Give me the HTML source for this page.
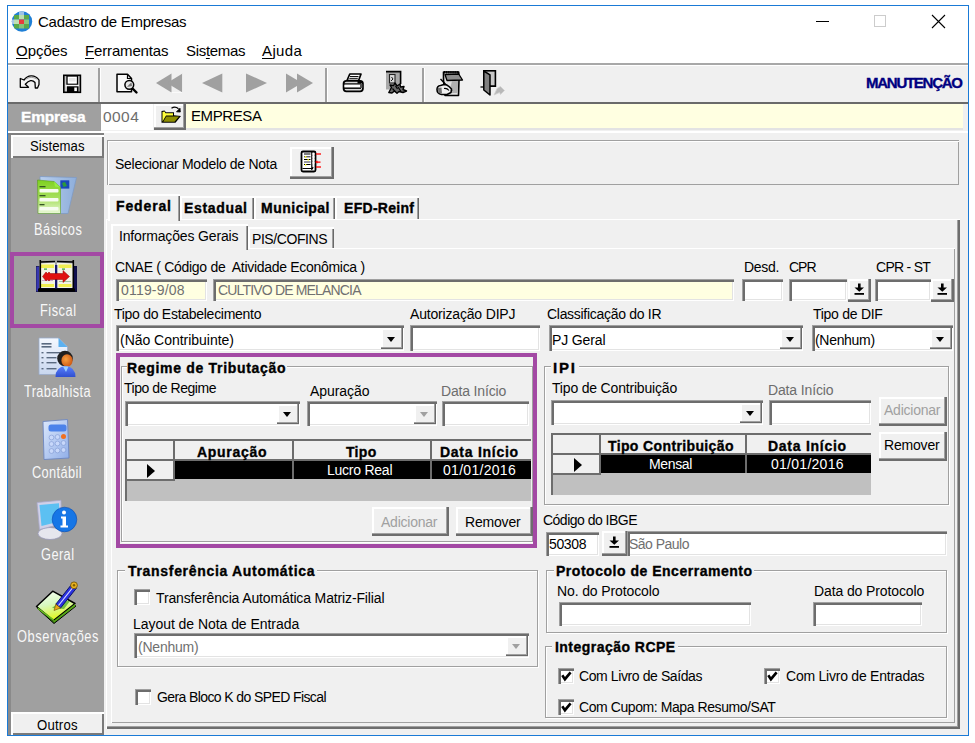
<!DOCTYPE html>
<html><head><meta charset="utf-8"><style>
html,body{margin:0;padding:0;width:975px;height:743px;overflow:hidden;background:#fff}
body{position:relative;font-family:"Liberation Sans",sans-serif}
div,span{position:absolute;box-sizing:border-box}
span{white-space:pre;line-height:20px}
u{text-decoration:underline;text-underline-offset:2px}
</style></head><body>
<div style="left:7px;top:5px;width:962px;height:731px;background:#f0f0f0;border:1px solid #1a7ad6"></div>
<div style="left:8px;top:6px;width:960px;height:57px;background:#fff"></div>
<div style="left:8px;top:63px;width:960px;height:2px;background:#a8a8a8"></div>
<div style="left:8px;top:65px;width:960px;height:1px;background:#fff"></div>
<span style="left:38px;top:12px;font-size:15px;font-weight:normal;color:#000;letter-spacing:-0.258px;">Cadastro de Empresas</span>
<span style="left:16px;top:41px;font-size:15px;font-weight:normal;color:#000;letter-spacing:-0.039px;"><u>O</u>pções</span>
<span style="left:85px;top:41px;font-size:15px;font-weight:normal;color:#000;letter-spacing:-0.153px;"><u>F</u>erramentas</span>
<span style="left:186px;top:41px;font-size:15px;font-weight:normal;color:#000;letter-spacing:-0.312px;">Sis<u>t</u>emas</span>
<span style="left:262px;top:41px;font-size:15px;font-weight:normal;color:#000;letter-spacing:0.384px;"><u>A</u>juda</span>
<div style="left:8px;top:102px;width:960px;height:2px;background:#6a6a6a"></div>
<div style="left:8px;top:104px;width:93px;height:27px;background:#a0a0a0"></div>
<span style="left:21px;top:107px;font-size:15.5px;font-weight:bold;color:#fff;letter-spacing:-0.164px;-webkit-text-stroke:0.35px #fff;">Empresa</span>
<div style="left:101px;top:104px;width:52px;height:26px;background:#fff"></div>
<span style="left:103px;top:107px;font-size:15.5px;font-weight:normal;color:#6d6d6d;letter-spacing:0.440px;">0004</span>
<div style="left:154px;top:104px;width:32px;height:26px;background:#f0f0f0;box-shadow:inset -2px -2px #6d6d6d, inset -3px -3px #a0a0a0, inset 2px 2px #fff"></div>
<div style="left:186px;top:104px;width:777px;height:24px;background:#ffffe1"></div>
<div style="left:186px;top:128px;width:777px;height:2px;background:#e3e3e3"></div>
<span style="left:191px;top:106px;font-size:15px;font-weight:normal;color:#000;letter-spacing:-0.409px;">EMPRESA</span>
<span style="left:866px;top:73px;font-size:15px;font-weight:bold;color:#000080;letter-spacing:-1.258px;-webkit-text-stroke:0.35px #000080;">MANUTENÇÃO</span>
<div style="left:8px;top:131px;width:96px;height:604px;background:#a0a0a0"></div>
<div style="left:8px;top:131px;width:3px;height:604px;background:#8a8a8a"></div>
<div style="left:8px;top:131px;width:96px;height:2px;background:#fff"></div>
<div style="left:8px;top:133px;width:96px;height:2px;background:#808080"></div>
<div style="left:11px;top:135px;width:93px;height:23px;background:#f0f0f0;box-shadow:inset 2px 2px #fff, inset -2px -2px #7a7a7a"></div>
<span style="left:30px;top:136px;font-size:15.5px;font-weight:normal;color:#000;letter-spacing:0.054px;transform:scaleX(0.85);transform-origin:0 0;">Sistemas</span>
<div style="left:11px;top:712px;width:93px;height:23px;background:#f0f0f0;box-shadow:inset 2px 2px #fff, inset -2px -2px #7a7a7a"></div>
<span style="left:37px;top:715px;font-size:15.5px;font-weight:normal;color:#000;letter-spacing:0.226px;transform:scaleX(0.85);transform-origin:0 0;">Outros</span>
<span style="left:34px;top:220px;font-size:16px;font-weight:normal;color:#f8f8f8;letter-spacing:0.621px;transform:scaleX(0.8);transform-origin:0 0;">Básicos</span>
<span style="left:40px;top:301px;font-size:16px;font-weight:normal;color:#f8f8f8;letter-spacing:0.644px;transform:scaleX(0.8);transform-origin:0 0;">Fiscal</span>
<span style="left:24px;top:382px;font-size:16px;font-weight:normal;color:#f8f8f8;letter-spacing:0.457px;transform:scaleX(0.8);transform-origin:0 0;">Trabalhista</span>
<span style="left:32px;top:463px;font-size:16px;font-weight:normal;color:#f8f8f8;letter-spacing:0.453px;transform:scaleX(0.8);transform-origin:0 0;">Contábil</span>
<span style="left:41px;top:545px;font-size:16px;font-weight:normal;color:#f8f8f8;letter-spacing:0.531px;transform:scaleX(0.8);transform-origin:0 0;">Geral</span>
<span style="left:17px;top:627px;font-size:16px;font-weight:normal;color:#f8f8f8;letter-spacing:0.761px;transform:scaleX(0.8);transform-origin:0 0;">Observações</span>
<div style="left:10px;top:252px;width:94px;height:76px;border:4px solid #a349a4"></div>
<div style="left:104px;top:131px;width:864px;height:2px;background:#fff"></div>
<div style="left:107px;top:140px;width:852px;height:45px;box-shadow:inset 1px 1px #a0a0a0, inset 2px 2px #fff, inset -1px -1px #a0a0a0"></div>
<span style="left:115px;top:154px;font-size:14px;font-weight:normal;color:#000;letter-spacing:-0.278px;">Selecionar Modelo de Nota</span>
<div style="left:290px;top:147px;width:44px;height:32px;background:#f0f0f0;box-shadow:inset -2px -2px #6d6d6d, inset -3px -3px #a0a0a0, inset 2px 2px #fff"></div>
<div style="left:106px;top:219px;width:854px;height:510px;box-shadow:inset 1px 1px #fff, inset -2px -2px #6d6d6d, inset -3px -3px #a0a0a0"></div>
<div style="left:108px;top:194px;width:72px;height:27px;background:#f0f0f0;box-shadow:inset 2px 2px #fff, inset -1px 0 #696969, inset -2px 0 #a0a0a0"></div>
<span style="left:116px;top:196px;font-size:14px;font-weight:bold;color:#000;letter-spacing:0.867px;-webkit-text-stroke:0.35px #000;">Federal</span>
<div style="left:180px;top:196px;width:74px;height:23px;background:#f0f0f0;box-shadow:inset 2px 2px #fff, inset -1px 0 #696969, inset -2px 0 #a0a0a0"></div>
<span style="left:184px;top:198px;font-size:14px;font-weight:bold;color:#000;letter-spacing:0.664px;-webkit-text-stroke:0.35px #000;">Estadual</span>
<div style="left:254px;top:196px;width:81px;height:23px;background:#f0f0f0;box-shadow:inset 2px 2px #fff, inset -1px 0 #696969, inset -2px 0 #a0a0a0"></div>
<span style="left:261px;top:198px;font-size:14px;font-weight:bold;color:#000;letter-spacing:0.493px;-webkit-text-stroke:0.35px #000;">Municipal</span>
<div style="left:335px;top:196px;width:84px;height:23px;background:#f0f0f0;box-shadow:inset 2px 2px #fff, inset -1px 0 #696969, inset -2px 0 #a0a0a0"></div>
<span style="left:344px;top:198px;font-size:14px;font-weight:bold;color:#000;letter-spacing:0.292px;-webkit-text-stroke:0.35px #000;">EFD-Reinf</span>
<div style="left:111px;top:248px;width:844px;height:475px;box-shadow:inset 1px 1px #fff, inset -1px -1px #a0a0a0"></div>
<div style="left:111px;top:224px;width:137px;height:26px;background:#f0f0f0;box-shadow:inset 2px 2px #fff, inset -1px 0 #696969, inset -2px 0 #a0a0a0"></div>
<span style="left:119px;top:226px;font-size:14px;font-weight:normal;color:#000;letter-spacing:-0.156px;">Informações Gerais</span>
<div style="left:248px;top:227px;width:86px;height:21px;background:#f0f0f0;box-shadow:inset 2px 2px #fff, inset -1px 0 #696969, inset -2px 0 #a0a0a0"></div>
<span style="left:252px;top:229px;font-size:14px;font-weight:normal;color:#000;letter-spacing:-0.427px;">PIS/COFINS</span>
<span style="left:115px;top:257px;font-size:14px;font-weight:normal;color:#000;letter-spacing:-0.299px;">CNAE ( Código de  Atividade Econômica )</span>
<span style="left:744px;top:257px;font-size:14px;font-weight:normal;color:#000;letter-spacing:-0.268px;">Desd.</span>
<span style="left:789px;top:257px;font-size:14px;font-weight:normal;color:#000;letter-spacing:-1.029px;">CPR</span>
<span style="left:876px;top:257px;font-size:14px;font-weight:normal;color:#000;letter-spacing:-0.713px;">CPR - ST</span>
<div style="left:116px;top:279px;width:91px;height:22px;background:#ffffe1;box-shadow:inset 1px 1px #a0a0a0, inset 3px 3px #6d6d6d, inset -1px -1px #fff, inset -2px -2px #e3e3e3"></div>
<span style="left:121px;top:280px;font-size:14px;font-weight:normal;color:#707070;letter-spacing:0.186px;">0119-9/08</span>
<div style="left:213px;top:279px;width:521px;height:22px;background:#ffffe1;box-shadow:inset 1px 1px #a0a0a0, inset 3px 3px #6d6d6d, inset -1px -1px #fff, inset -2px -2px #e3e3e3"></div>
<span style="left:218px;top:280px;font-size:14px;font-weight:normal;color:#707070;letter-spacing:-0.830px;">CULTIVO DE MELANCIA</span>
<div style="left:742px;top:279px;width:41px;height:22px;background:#fff;box-shadow:inset 1px 1px #a0a0a0, inset 3px 3px #6d6d6d, inset -1px -1px #fff, inset -2px -2px #e3e3e3"></div>
<div style="left:789px;top:279px;width:58px;height:22px;background:#fff;box-shadow:inset 1px 1px #a0a0a0, inset 3px 3px #6d6d6d, inset -1px -1px #fff, inset -2px -2px #e3e3e3"></div>
<div style="left:848px;top:279px;width:23px;height:23px;background:#f0f0f0;box-shadow:inset -2px -2px #6d6d6d, inset -3px -3px #a0a0a0, inset 2px 2px #fff"></div>
<svg style="position:absolute;left:854px;top:283px" width="11" height="13" viewBox="0 0 11 13"><rect x="4" y="0.5" width="2.6" height="4.5" fill="#000"/><path d="M0.5 4.5 L10 4.5 L5.3 8.8 Z" fill="#000"/><rect x="0.5" y="10" width="9.5" height="1.8" fill="#000"/></svg>
<div style="left:875px;top:279px;width:56px;height:22px;background:#fff;box-shadow:inset 1px 1px #a0a0a0, inset 3px 3px #6d6d6d, inset -1px -1px #fff, inset -2px -2px #e3e3e3"></div>
<div style="left:931px;top:279px;width:23px;height:23px;background:#f0f0f0;box-shadow:inset -2px -2px #6d6d6d, inset -3px -3px #a0a0a0, inset 2px 2px #fff"></div>
<svg style="position:absolute;left:937px;top:283px" width="11" height="13" viewBox="0 0 11 13"><rect x="4" y="0.5" width="2.6" height="4.5" fill="#000"/><path d="M0.5 4.5 L10 4.5 L5.3 8.8 Z" fill="#000"/><rect x="0.5" y="10" width="9.5" height="1.8" fill="#000"/></svg>
<span style="left:114px;top:304px;font-size:14px;font-weight:normal;color:#000;letter-spacing:-0.276px;">Tipo do Estabelecimento</span>
<span style="left:410px;top:304px;font-size:14px;font-weight:normal;color:#000;letter-spacing:-0.177px;">Autorização DIPJ</span>
<span style="left:547px;top:304px;font-size:14px;font-weight:normal;color:#000;letter-spacing:-0.296px;">Classificação do IR</span>
<span style="left:813px;top:304px;font-size:14px;font-weight:normal;color:#000;letter-spacing:-0.272px;">Tipo de DIF</span>
<div style="left:116px;top:325px;width:288px;height:26px;background:#fff;box-shadow:inset 1px 1px #a0a0a0, inset 3px 3px #6d6d6d, inset -1px -1px #fff, inset -2px -2px #e3e3e3"></div>
<div style="left:381px;top:328px;width:22px;height:21px;background:#f0f0f0;box-shadow:inset -1px -1px #696969, inset -2px -2px #a0a0a0, inset 2px 2px #fff"></div>
<div style="left:387.0px;top:336.5px;width:0;height:0;border-left:4.5px solid transparent;border-right:4.5px solid transparent;border-top:5px solid #000"></div>
<span style="left:120px;top:330px;font-size:14px;font-weight:normal;color:#000;letter-spacing:-0.023px;">(Não Contribuinte)</span>
<div style="left:410px;top:325px;width:130px;height:26px;background:#fff;box-shadow:inset 1px 1px #a0a0a0, inset 3px 3px #6d6d6d, inset -1px -1px #fff, inset -2px -2px #e3e3e3"></div>
<div style="left:549px;top:325px;width:254px;height:26px;background:#fff;box-shadow:inset 1px 1px #a0a0a0, inset 3px 3px #6d6d6d, inset -1px -1px #fff, inset -2px -2px #e3e3e3"></div>
<div style="left:780px;top:328px;width:22px;height:21px;background:#f0f0f0;box-shadow:inset -1px -1px #696969, inset -2px -2px #a0a0a0, inset 2px 2px #fff"></div>
<div style="left:786.0px;top:336.5px;width:0;height:0;border-left:4.5px solid transparent;border-right:4.5px solid transparent;border-top:5px solid #000"></div>
<span style="left:552px;top:330px;font-size:14px;font-weight:normal;color:#000;letter-spacing:-0.137px;">PJ Geral</span>
<div style="left:812px;top:325px;width:141px;height:26px;background:#fff;box-shadow:inset 1px 1px #a0a0a0, inset 3px 3px #6d6d6d, inset -1px -1px #fff, inset -2px -2px #e3e3e3"></div>
<div style="left:930px;top:328px;width:22px;height:21px;background:#f0f0f0;box-shadow:inset -1px -1px #696969, inset -2px -2px #a0a0a0, inset 2px 2px #fff"></div>
<div style="left:936.0px;top:336.5px;width:0;height:0;border-left:4.5px solid transparent;border-right:4.5px solid transparent;border-top:5px solid #000"></div>
<span style="left:815px;top:330px;font-size:14px;font-weight:normal;color:#000;letter-spacing:-0.306px;">(Nenhum)</span>
<div style="left:121px;top:366px;width:412px;height:176px;border:1px solid #a0a0a0;box-shadow:inset 1px 1px #fff, 1px 1px #fff"></div>
<div style="left:127px;top:358px;width:160px;height:14px;background:#f0f0f0"></div>
<span style="left:127px;top:358px;font-size:14px;font-weight:bold;color:#000;letter-spacing:0.685px;-webkit-text-stroke:0.35px #000;">Regime de Tributação</span>
<span style="left:124px;top:378px;font-size:14px;font-weight:normal;color:#000;letter-spacing:-0.447px;">Tipo de Regime</span>
<span style="left:310px;top:381px;font-size:14px;font-weight:normal;color:#000;letter-spacing:-0.062px;">Apuração</span>
<span style="left:441px;top:381px;font-size:14px;font-weight:normal;color:#6d6d6d;letter-spacing:-0.172px;">Data Início</span>
<div style="left:125px;top:401px;width:175px;height:25px;background:#fff;box-shadow:inset 1px 1px #a0a0a0, inset 3px 3px #6d6d6d, inset -1px -1px #fff, inset -2px -2px #e3e3e3"></div>
<div style="left:277px;top:404px;width:22px;height:20px;background:#f0f0f0;box-shadow:inset -1px -1px #696969, inset -2px -2px #a0a0a0, inset 2px 2px #fff"></div>
<div style="left:283.0px;top:412.0px;width:0;height:0;border-left:4.5px solid transparent;border-right:4.5px solid transparent;border-top:5px solid #000"></div>
<div style="left:307px;top:401px;width:130px;height:25px;background:#fff;box-shadow:inset 1px 1px #a0a0a0, inset 3px 3px #6d6d6d, inset -1px -1px #fff, inset -2px -2px #e3e3e3"></div>
<div style="left:414px;top:404px;width:22px;height:20px;background:#f0f0f0;box-shadow:inset -1px -1px #696969, inset -2px -2px #a0a0a0, inset 2px 2px #fff"></div>
<div style="left:420.0px;top:412.0px;width:0;height:0;border-left:4.5px solid transparent;border-right:4.5px solid transparent;border-top:5px solid #a0a0a0"></div>
<div style="left:442px;top:401px;width:87px;height:25px;background:#fff;box-shadow:inset 1px 1px #a0a0a0, inset 3px 3px #6d6d6d, inset -1px -1px #fff, inset -2px -2px #e3e3e3"></div>
<div style="left:125px;top:439px;width:406px;height:62px;background:#c0c0c0;box-shadow:inset 2px 2px #6d6d6d"></div>
<div style="left:127px;top:441px;width:404px;height:18px;background:#f0f0f0"></div>
<div style="left:173px;top:441px;width:2px;height:38px;background:#6d6d6d"></div>
<div style="left:127px;top:459px;width:404px;height:2px;background:#6d6d6d"></div>
<div style="left:175px;top:461px;width:356px;height:18px;background:#000"></div>
<div style="left:127px;top:461px;width:46px;height:18px;background:#f0f0f0"></div>
<div style="left:127px;top:479px;width:48px;height:2px;background:#6d6d6d"></div>
<div style="left:292px;top:441px;width:2px;height:38px;background:#6d6d6d"></div>
<div style="left:430px;top:441px;width:2px;height:38px;background:#6d6d6d"></div>
<span style="left:197px;top:442px;font-size:14px;font-weight:bold;color:#000;letter-spacing:0.704px;-webkit-text-stroke:0.35px #000;">Apuração</span>
<span style="left:346px;top:442px;font-size:14px;font-weight:bold;color:#000;letter-spacing:0.303px;-webkit-text-stroke:0.35px #000;">Tipo</span>
<span style="left:440px;top:442px;font-size:14px;font-weight:bold;color:#000;letter-spacing:0.731px;-webkit-text-stroke:0.35px #000;">Data Início</span>
<span style="left:327px;top:460px;font-size:14px;font-weight:normal;color:#fff;letter-spacing:-0.245px;">Lucro Real</span>
<span style="left:443px;top:460px;font-size:14px;font-weight:normal;color:#fff;letter-spacing:0.292px;">01/01/2016</span>
<div style="left:147px;top:464px;width:0;height:0;border-top:7px solid transparent;border-bottom:7px solid transparent;border-left:8px solid #000"></div>
<div style="left:372px;top:507px;width:77px;height:29px;background:#f0f0f0;box-shadow:inset -2px -2px #6d6d6d, inset -3px -3px #a0a0a0, inset 2px 2px #fff"></div>
<span style="left:381px;top:512px;font-size:14px;font-weight:normal;color:#a0a0a0;letter-spacing:-0.233px;">Adicionar</span>
<div style="left:456px;top:507px;width:77px;height:29px;background:#f0f0f0;box-shadow:inset -2px -2px #6d6d6d, inset -3px -3px #a0a0a0, inset 2px 2px #fff"></div>
<span style="left:465px;top:512px;font-size:14px;font-weight:normal;color:#000;letter-spacing:-0.182px;">Remover</span>
<div style="left:116px;top:353px;width:421px;height:195px;border:4px solid #a349a4"></div>
<div style="left:544px;top:366px;width:405px;height:139px;border:1px solid #a0a0a0;box-shadow:inset 1px 1px #fff, 1px 1px #fff"></div>
<div style="left:551px;top:358px;width:28px;height:14px;background:#f0f0f0"></div>
<span style="left:553px;top:358px;font-size:15px;font-weight:bold;color:#000;letter-spacing:1.830px;-webkit-text-stroke:0.35px #000;">IPI</span>
<span style="left:552px;top:378px;font-size:14px;font-weight:normal;color:#000;letter-spacing:-0.182px;">Tipo de Contribuição</span>
<span style="left:768px;top:380px;font-size:14px;font-weight:normal;color:#6d6d6d;letter-spacing:-0.142px;">Data Início</span>
<div style="left:551px;top:400px;width:212px;height:25px;background:#fff;box-shadow:inset 1px 1px #a0a0a0, inset 3px 3px #6d6d6d, inset -1px -1px #fff, inset -2px -2px #e3e3e3"></div>
<div style="left:740px;top:403px;width:22px;height:20px;background:#f0f0f0;box-shadow:inset -1px -1px #696969, inset -2px -2px #a0a0a0, inset 2px 2px #fff"></div>
<div style="left:746.0px;top:411.0px;width:0;height:0;border-left:4.5px solid transparent;border-right:4.5px solid transparent;border-top:5px solid #000"></div>
<div style="left:769px;top:400px;width:102px;height:25px;background:#fff;box-shadow:inset 1px 1px #a0a0a0, inset 3px 3px #6d6d6d, inset -1px -1px #fff, inset -2px -2px #e3e3e3"></div>
<div style="left:879px;top:397px;width:68px;height:29px;background:#f0f0f0;box-shadow:inset -2px -2px #6d6d6d, inset -3px -3px #a0a0a0, inset 2px 2px #fff"></div>
<span style="left:884px;top:400px;font-size:14px;font-weight:normal;color:#a0a0a0;letter-spacing:-0.233px;">Adicionar</span>
<div style="left:879px;top:432px;width:68px;height:29px;background:#f0f0f0;box-shadow:inset -2px -2px #6d6d6d, inset -3px -3px #a0a0a0, inset 2px 2px #fff"></div>
<span style="left:884px;top:435px;font-size:14px;font-weight:normal;color:#000;letter-spacing:-0.182px;">Remover</span>
<div style="left:551px;top:433px;width:320px;height:62px;background:#c0c0c0;box-shadow:inset 2px 2px #6d6d6d"></div>
<div style="left:553px;top:435px;width:318px;height:18px;background:#f0f0f0"></div>
<div style="left:553px;top:453px;width:318px;height:2px;background:#6d6d6d"></div>
<div style="left:601px;top:455px;width:270px;height:18px;background:#000"></div>
<div style="left:553px;top:455px;width:46px;height:18px;background:#f0f0f0"></div>
<div style="left:553px;top:473px;width:48px;height:2px;background:#6d6d6d"></div>
<div style="left:599px;top:435px;width:2px;height:38px;background:#6d6d6d"></div>
<div style="left:745px;top:435px;width:2px;height:38px;background:#6d6d6d"></div>
<span style="left:608px;top:436px;font-size:14px;font-weight:bold;color:#000;letter-spacing:0.374px;-webkit-text-stroke:0.35px #000;">Tipo Contribuição</span>
<span style="left:768px;top:436px;font-size:14px;font-weight:bold;color:#000;letter-spacing:0.731px;-webkit-text-stroke:0.35px #000;">Data Início</span>
<span style="left:649px;top:454px;font-size:14px;font-weight:normal;color:#fff;letter-spacing:-0.366px;">Mensal</span>
<span style="left:771px;top:454px;font-size:14px;font-weight:normal;color:#fff;letter-spacing:0.270px;">01/01/2016</span>
<div style="left:574px;top:458px;width:0;height:0;border-top:7px solid transparent;border-bottom:7px solid transparent;border-left:8px solid #000"></div>
<span style="left:543px;top:510px;font-size:14px;font-weight:normal;color:#000;letter-spacing:-0.513px;">Código do IBGE</span>
<div style="left:546px;top:532px;width:53px;height:24px;background:#fff;box-shadow:inset 1px 1px #a0a0a0, inset 3px 3px #6d6d6d, inset -1px -1px #fff, inset -2px -2px #e3e3e3"></div>
<span style="left:549px;top:534px;font-size:14px;font-weight:normal;color:#000;letter-spacing:-0.358px;">50308</span>
<div style="left:602px;top:531px;width:26px;height:25px;background:#f0f0f0;box-shadow:inset -2px -2px #6d6d6d, inset -3px -3px #a0a0a0, inset 2px 2px #fff"></div>
<svg style="position:absolute;left:609px;top:536px" width="11" height="13" viewBox="0 0 11 13"><rect x="4" y="0.5" width="2.6" height="4.5" fill="#000"/><path d="M0.5 4.5 L10 4.5 L5.3 8.8 Z" fill="#000"/><rect x="0.5" y="10" width="9.5" height="1.8" fill="#000"/></svg>
<div style="left:627px;top:531px;width:320px;height:25px;background:#fff;box-shadow:inset 1px 1px #a0a0a0, inset 3px 3px #6d6d6d, inset -1px -1px #fff, inset -2px -2px #e3e3e3"></div>
<span style="left:629px;top:534px;font-size:14px;font-weight:normal;color:#707070;letter-spacing:-0.513px;">São Paulo</span>
<div style="left:117px;top:570px;width:421px;height:97px;border:1px solid #a0a0a0;box-shadow:inset 1px 1px #fff, 1px 1px #fff"></div>
<div style="left:125px;top:562px;width:192px;height:14px;background:#f0f0f0"></div>
<span style="left:128px;top:561px;font-size:14px;font-weight:bold;color:#000;letter-spacing:0.689px;-webkit-text-stroke:0.35px #000;">Transferência Automática</span>
<div style="left:134px;top:589px;width:16px;height:16px;background:#fff;box-shadow:inset 1px 1px #a0a0a0, inset 3px 3px #6d6d6d, inset -1px -1px #fff, inset -2px -2px #e3e3e3"></div>
<span style="left:156px;top:588px;font-size:14px;font-weight:normal;color:#000;letter-spacing:-0.140px;">Transferência Automática Matriz-Filial</span>
<span style="left:133px;top:614px;font-size:14px;font-weight:normal;color:#000;letter-spacing:-0.048px;">Layout de Nota de Entrada</span>
<div style="left:134px;top:633px;width:395px;height:25px;background:#fff;box-shadow:inset 1px 1px #a0a0a0, inset 3px 3px #6d6d6d, inset -1px -1px #fff, inset -2px -2px #e3e3e3"></div>
<div style="left:506px;top:636px;width:22px;height:20px;background:#f0f0f0;box-shadow:inset -1px -1px #696969, inset -2px -2px #a0a0a0, inset 2px 2px #fff"></div>
<div style="left:512.0px;top:644.0px;width:0;height:0;border-left:4.5px solid transparent;border-right:4.5px solid transparent;border-top:5px solid #a0a0a0"></div>
<span style="left:138px;top:637px;font-size:14px;font-weight:normal;color:#707070;letter-spacing:-0.220px;">(Nenhum)</span>
<div style="left:135px;top:689px;width:16px;height:16px;background:#fff;box-shadow:inset 1px 1px #a0a0a0, inset 3px 3px #6d6d6d, inset -1px -1px #fff, inset -2px -2px #e3e3e3"></div>
<span style="left:157px;top:687px;font-size:14px;font-weight:normal;color:#000;letter-spacing:-0.603px;">Gera Bloco K do SPED Fiscal</span>
<div style="left:546px;top:570px;width:401px;height:63px;border:1px solid #a0a0a0;box-shadow:inset 1px 1px #fff, 1px 1px #fff"></div>
<div style="left:554px;top:562px;width:200px;height:14px;background:#f0f0f0"></div>
<span style="left:556px;top:561px;font-size:14px;font-weight:bold;color:#000;letter-spacing:0.517px;-webkit-text-stroke:0.35px #000;">Protocolo de Encerramento</span>
<span style="left:557px;top:581px;font-size:14px;font-weight:normal;color:#000;letter-spacing:-0.119px;">No. do Protocolo</span>
<span style="left:814px;top:581px;font-size:14px;font-weight:normal;color:#000;letter-spacing:-0.111px;">Data do Protocolo</span>
<div style="left:559px;top:602px;width:192px;height:24px;background:#fff;box-shadow:inset 1px 1px #a0a0a0, inset 3px 3px #6d6d6d, inset -1px -1px #fff, inset -2px -2px #e3e3e3"></div>
<div style="left:813px;top:602px;width:109px;height:24px;background:#fff;box-shadow:inset 1px 1px #a0a0a0, inset 3px 3px #6d6d6d, inset -1px -1px #fff, inset -2px -2px #e3e3e3"></div>
<div style="left:545px;top:646px;width:402px;height:72px;border:1px solid #a0a0a0;box-shadow:inset 1px 1px #fff, 1px 1px #fff"></div>
<div style="left:552px;top:638px;width:126px;height:14px;background:#f0f0f0"></div>
<span style="left:555px;top:637px;font-size:14px;font-weight:bold;color:#000;letter-spacing:0.465px;-webkit-text-stroke:0.35px #000;">Integração RCPE</span>
<div style="left:558px;top:668px;width:16px;height:16px;background:#fff;box-shadow:inset 1px 1px #a0a0a0, inset 3px 3px #6d6d6d, inset -1px -1px #fff, inset -2px -2px #e3e3e3"></div>
<svg style="position:absolute;left:558px;top:668px" width="16" height="16" viewBox="0 0 16 16"><path d="M4.3 7.3 L6.9 11.2 L12.6 4.3" stroke="#000" stroke-width="2.6" fill="none" stroke-linejoin="miter"/></svg>
<div style="left:764px;top:668px;width:16px;height:16px;background:#fff;box-shadow:inset 1px 1px #a0a0a0, inset 3px 3px #6d6d6d, inset -1px -1px #fff, inset -2px -2px #e3e3e3"></div>
<svg style="position:absolute;left:764px;top:668px" width="16" height="16" viewBox="0 0 16 16"><path d="M4.3 7.3 L6.9 11.2 L12.6 4.3" stroke="#000" stroke-width="2.6" fill="none" stroke-linejoin="miter"/></svg>
<div style="left:558px;top:699px;width:16px;height:16px;background:#fff;box-shadow:inset 1px 1px #a0a0a0, inset 3px 3px #6d6d6d, inset -1px -1px #fff, inset -2px -2px #e3e3e3"></div>
<svg style="position:absolute;left:558px;top:699px" width="16" height="16" viewBox="0 0 16 16"><path d="M4.3 7.3 L6.9 11.2 L12.6 4.3" stroke="#000" stroke-width="2.6" fill="none" stroke-linejoin="miter"/></svg>
<span style="left:579px;top:666px;font-size:14px;font-weight:normal;color:#000;letter-spacing:-0.402px;">Com Livro de Saídas</span>
<span style="left:786px;top:666px;font-size:14px;font-weight:normal;color:#000;letter-spacing:-0.234px;">Com Livro de Entradas</span>
<span style="left:579px;top:697px;font-size:14px;font-weight:normal;color:#000;letter-spacing:-0.423px;">Com Cupom: Mapa Resumo/SAT</span>
<div style="left:816px;top:21px;width:13px;height:1px;background:#000"></div>
<div style="left:874px;top:15px;width:12px;height:12px;border:1px solid #cccccc"></div>
<div style="left:931px;top:14px;width:15px;height:15px"><svg width="15" height="15" viewBox="0 0 15 15"><path d="M1 1 L14 14 M14 1 L1 14" stroke="#000" stroke-width="1.1"/></svg></div>
<svg style="position:absolute;left:10px;top:9px" width="25" height="25" viewBox="10 9 25 25">
<defs><clipPath id="cc"><circle cx="22" cy="21.5" r="10.2"/></clipPath></defs>
<g clip-path="url(#cc)">
<rect x="11" y="11" width="23" height="22" fill="#1f7fd6"/>
<rect x="14" y="15" width="5" height="4.5" fill="#5aaa4a"/><rect x="19" y="15" width="5" height="4.5" fill="#b9deb0"/><rect x="24" y="15" width="5" height="4.5" fill="#5aaa4a"/>
<rect x="19" y="11" width="5" height="4" fill="#9cc3e6"/>
<rect x="11" y="19.5" width="3" height="4.5" fill="#a9c8ea"/>
<rect x="14" y="19.5" width="5" height="4.5" fill="#bfe0b4"/><rect x="19" y="19.5" width="5" height="4.5" fill="#e83b3b"/><rect x="24" y="19.5" width="5" height="4.5" fill="#8cc67e"/>
<rect x="14" y="24" width="5" height="4.5" fill="#5aaa4a"/><rect x="19" y="24" width="5" height="4.5" fill="#86c178"/><rect x="24" y="24" width="5" height="4.5" fill="#5aaa4a"/>
</g></svg>
<svg style="position:absolute;left:16px;top:72px" width="26" height="20" viewBox="16 72 26 20">
<path d="M20.3 78.5 L20.3 87.3 L28.5 87.3 L25.3 84.3 Q31 78 35 82.5 L35.3 88 L37.5 88 L39 84.5 L39 80 Q36 75.5 31 75.8 Q27 76 24 80 Z" fill="#f4f4f4" stroke="#000" stroke-width="1.3" stroke-linejoin="round"/>
<path d="M26 79 Q31 75.5 37 79" stroke="#a0a0a0" stroke-width="1.2" fill="none"/></svg>
<svg style="position:absolute;left:61px;top:73px" width="22" height="22" viewBox="61 73 22 22">
<rect x="63.8" y="75.3" width="16.6" height="17" fill="#c8c8c8" stroke="#000" stroke-width="1.6"/>
<rect x="67" y="76" width="10.5" height="8.3" fill="#fff" stroke="#000" stroke-width="1.3"/>
<rect x="69" y="78" width="6.5" height="3.5" fill="#e6e6e6"/>
<rect x="65.5" y="84.8" width="13.5" height="1.6" fill="#f8f8f8"/>
<rect x="67" y="86.3" width="11.5" height="6" fill="#000"/>
<rect x="74.3" y="87.5" width="2.6" height="3.6" fill="#fff"/></svg>
<svg style="position:absolute;left:114px;top:72px" width="26" height="24" viewBox="114 72 26 24">
<path d="M117 74.2 L127.5 74.2 L131.5 78.5 L131.5 91.8 L117 91.8 Z" fill="#f8f8f8" stroke="#000" stroke-width="1.5" stroke-linejoin="round"/>
<path d="M127.5 74.2 L127.5 78.5 L131.5 78.5" fill="none" stroke="#000" stroke-width="1.2"/>
<line x1="132.5" y1="88.5" x2="136.5" y2="92.5" stroke="#000" stroke-width="2.4" stroke-linecap="round"/>
<circle cx="129.3" cy="84.8" r="4.4" fill="#e8e8e8" stroke="#000" stroke-width="1.5"/>
<path d="M127 87 Q130 83 131.5 82.5 L132 86 Z" fill="#777"/></svg>
<svg style="position:absolute;left:150px;top:70px" width="180" height="26" viewBox="150 70 180 26">
<path d="M156 83 L171.5 73.5 L171.5 92.5 Z" fill="#a0a0a0"/>
<path d="M167 83 L182.5 73.5 L182.5 92.5 Z" fill="#a0a0a0"/>
<path d="M171.5 92.5 L182.5 92.5 L182.5 73.5" fill="none" stroke="#fff" stroke-width="0.8" opacity="0.8"/>
<path d="M202 83 L222.3 73.5 L222.3 92.5 Z" fill="#a0a0a0"/>
<path d="M267 83 L246 73.5 L246 92.5 Z" fill="#a0a0a0"/>
<path d="M302 83 L286 73.5 L286 92.5 Z" fill="#a0a0a0"/>
<path d="M313 83 L297 73.5 L297 92.5 Z" fill="#a0a0a0"/>
</svg>
<div style="position:absolute;left:98px;top:68px;width:1.5px;height:34px;background:#a0a0a0;box-shadow:1px 0 #fff"></div>
<div style="position:absolute;left:325px;top:68px;width:1.5px;height:34px;background:#a0a0a0;box-shadow:1px 0 #fff"></div>
<div style="position:absolute;left:422px;top:68px;width:1.5px;height:34px;background:#a0a0a0;box-shadow:1px 0 #fff"></div>
<svg style="position:absolute;left:340px;top:70px" width="27" height="24" viewBox="340 70 27 24">
<path d="M349.8 74 L361 74 L358.6 80.5 L347 80.5 Z" fill="#fff" stroke="#000" stroke-width="1.7" stroke-linejoin="round"/>
<line x1="350" y1="76.6" x2="358.5" y2="76.6" stroke="#000" stroke-width="1.1"/>
<line x1="349.3" y1="78.6" x2="357.8" y2="78.6" stroke="#000" stroke-width="0.9"/>
<rect x="343.6" y="80.8" width="19.3" height="10.6" rx="2.8" fill="#d8d8d8" stroke="#000" stroke-width="1.8"/>
<rect x="344" y="83.3" width="17" height="1.4" fill="#000"/>
<rect x="344.5" y="84.7" width="15.5" height="2.8" fill="#fff"/>
<rect x="344" y="87.5" width="17" height="1.4" fill="#000"/>
<rect x="357.5" y="81" width="4.5" height="2.5" fill="#000"/>
<rect x="360" y="84" width="2.5" height="4" fill="#555"/></svg>
<svg style="position:absolute;left:384px;top:69px" width="25" height="26" viewBox="384 69 25 26">
<rect x="386" y="71.3" width="14.8" height="18.2" fill="#a8a8a8"/>
<path d="M386 71.6 L400.6 71.6 L400.6 84" fill="none" stroke="#000" stroke-width="1.6"/>
<rect x="389.5" y="74.5" width="5.5" height="8.5" fill="#d8d8d8" stroke="#222" stroke-width="1.1"/>
<path d="M391.5 77 L393 79 L391 81" stroke="#000" stroke-width="0.9" fill="none"/>
<path d="M388.8 92.5 L391.5 87.5 L390 85 L393.5 85.5 L395 83 L397 86 L400 84 L400.5 87 L404 86.5 L403 89.5 L406.5 91 L403 92.5 L399 91.5 L397 93.3 L394.5 91 L392 93 Z" fill="#6a6a6a" stroke="#000" stroke-width="1.4" stroke-linejoin="round"/>
<path d="M392.5 88.5 L395.5 92 M398 87 L401 91.5 M395.5 86 L397.5 89" stroke="#000" stroke-width="1.2"/></svg>
<svg style="position:absolute;left:434px;top:69px" width="31" height="30" viewBox="434 69 31 30">
<path d="M443.5 72 L458.7 72 L459 80 L458.5 95.5 L445 95.5 L443.5 80 Z" fill="#e0e0e0" stroke="#000" stroke-width="1.6" stroke-linejoin="round"/>
<path d="M445 74.5 L458.7 74 L462.5 80 L447 80.5 Z" fill="#8e8e8e" stroke="#000" stroke-width="1.3" stroke-linejoin="round"/>
<path d="M444 72.3 L459 72.3" stroke="#000" stroke-width="2.4" stroke-dasharray="1.3 0.8"/>
<path d="M452 81 L458 81 L458 93 L449 93 Z" fill="#b0b0b0"/>
<line x1="440.5" y1="79" x2="452" y2="91" stroke="#000" stroke-width="1.4"/>
<path d="M437 89.5 Q437 86 440.5 85.5 L444 84.5 Q447 84.5 449 86.5 L451.5 89 L451 92.5 L447 94.5 L441.5 94.5 Q437 93.5 437 89.5 Z" fill="#f0f0f0" stroke="#000" stroke-width="1.6" stroke-linejoin="round"/>
<path d="M437.8 88 L441.5 87.5 L442 93.5 L438.5 93 Z" fill="#707070"/>
<path d="M444 88.5 Q447 88 449 90.5" stroke="#000" stroke-width="1.1" fill="none"/></svg>
<svg style="position:absolute;left:478px;top:68px" width="30" height="30" viewBox="478 68 30 30">
<rect x="483.8" y="70.8" width="11.6" height="15.4" fill="#c8c8c8" stroke="#000" stroke-width="1.6"/>
<path d="M483.8 71 L490 74.8 L490 95 L483.8 90 Z" fill="#808080" stroke="#000" stroke-width="1.5" stroke-linejoin="round"/>
<line x1="480.5" y1="87" x2="484" y2="87" stroke="#000" stroke-width="1.3"/>
<line x1="490" y1="86.3" x2="496" y2="86.3" stroke="#000" stroke-width="1.3"/>
<path d="M497 88.5 L500.5 86.5 L504.5 90.5 L500.5 94.5 L499.5 92.5 L494 95 Z" fill="#b8b8b8" stroke="#d0d0d0" stroke-width="0.8"/></svg>
<svg style="position:absolute;left:158px;top:105px" width="26" height="22" viewBox="158 105 26 22">
<path d="M161.5 111 L164.5 110.5 L166 112.3 L174 112.3 L174 115.3 L181 116 L175.5 122.7 L161.5 122.7 Z" fill="#000"/>
<path d="M162.5 112 L164.5 111.5 L165.5 113.3 L173 113.3 L173 115.5 L166 115.5 L162.5 121.5 Z" fill="#ffff3c"/>
<path d="M166.3 116.5 L179 116.5 L174.5 121.7 L163.3 121.7 Z" fill="#8e8e00"/>
<path d="M171.5 108.3 Q175 105.8 178.5 108.8" fill="none" stroke="#000" stroke-width="1.3"/>
<path d="M176.5 111.8 L180 108.2 L180.3 112 Z" fill="#000" stroke="#000" stroke-width="0.8"/></svg>
<svg style="position:absolute;left:298px;top:148px" width="28" height="28" viewBox="298 148 28 28">
<rect x="301.5" y="151.5" width="14" height="20" rx="1.5" fill="#fff" stroke="#000" stroke-width="1.8"/>
<path d="M302.5 168.5 L312.5 168.5 L313 167" fill="none" stroke="#000" stroke-width="1.2"/>
<line x1="304" y1="154" x2="310.5" y2="154" stroke="#000" stroke-width="1"/>
<line x1="304" y1="156.8" x2="310.5" y2="156.8" stroke="#223" stroke-width="1"/>
<line x1="304" y1="159.5" x2="310.5" y2="159.5" stroke="#000" stroke-width="1"/>
<line x1="304" y1="162" x2="310.5" y2="162" stroke="#334" stroke-width="1"/>
<line x1="304" y1="164.5" x2="310.5" y2="164.5" stroke="#000" stroke-width="1"/>
<rect x="305" y="156" width="1.3" height="1.6" fill="#ff0"/><rect x="307.5" y="159" width="1.3" height="1.6" fill="#ff0"/><rect x="305" y="164" width="1.3" height="1.6" fill="#ff0"/>
<line x1="311.8" y1="152" x2="311.8" y2="170" stroke="#000" stroke-width="1.2"/>
<rect x="312.6" y="153" width="1.8" height="1.8" fill="#fff"/><rect x="312.6" y="156" width="1.8" height="1.8" fill="#fff"/><rect x="312.6" y="159" width="1.8" height="1.8" fill="#fff"/><rect x="312.6" y="162" width="1.8" height="1.8" fill="#fff"/>
<line x1="316" y1="154" x2="321" y2="154" stroke="#f00" stroke-width="1.3"/>
<path d="M315 162 L317.5 160.5 L317.5 161.5 L320.5 161.5 L320.5 162.8 L317.5 162.8 L317.5 163.5 Z" fill="#f00"/>
<line x1="316" y1="167" x2="321" y2="167" stroke="#f00" stroke-width="1.3"/></svg>
<svg style="position:absolute;left:34px;top:174px" width="45" height="44" viewBox="34 174 45 44">
<defs>
<linearGradient id="gb" x1="0" y1="0" x2="0" y2="1"><stop offset="0" stop-color="#7ed11f"/><stop offset="0.55" stop-color="#a8e060"/><stop offset="1" stop-color="#eaf8d8"/></linearGradient>
<linearGradient id="bb" x1="0" y1="0" x2="1" y2="0"><stop offset="0" stop-color="#b8cfee"/><stop offset="1" stop-color="#8eaedb"/></linearGradient>
</defs>
<path d="M40 176.5 L76.5 177.5 L68 213.5 L40 213.5 Z" fill="url(#bb)" stroke="#7f9bc4" stroke-width="0.8"/>
<rect x="60.3" y="180.3" width="9" height="8.3" fill="#1a48b8"/>
<path d="M62 183 L65 182 L67 186 L63.5 187 Z" fill="#2c9a3a"/>
<path d="M37.5 180 L54 181.5 L60.5 187.5 L60.5 213.5 L38 213.5 Z" fill="url(#gb)" stroke="#5a9a20" stroke-width="0.6"/>
<path d="M54 181.5 L55 186.5 L60.5 187.5 Z" fill="#96f040"/>
<rect x="39.5" y="189" width="19" height="3.6" rx="1" fill="#f6fcf0"/>
<rect x="39.5" y="198" width="19" height="3.6" rx="1" fill="#f6fcf0"/>
<rect x="39.5" y="207" width="19" height="3.6" rx="1" fill="#f6fcf0"/>
<rect x="39.5" y="186" width="6" height="1.3" fill="#335522"/>
<rect x="39.5" y="195" width="6" height="1.3" fill="#335522"/>
<rect x="39.5" y="204" width="5" height="1.3" fill="#335522"/></svg>
<svg style="position:absolute;left:34px;top:258px" width="46" height="37" viewBox="34 258 46 37">
<rect x="36" y="266" width="41" height="26" fill="#0c0c30"/>
<rect x="36.3" y="266.5" width="2.8" height="25" fill="#3838b0"/>
<rect x="74" y="266.5" width="2.8" height="24" fill="#101050"/>
<path d="M39.5 263.5 L55 262.5 L55 288 L39.5 288 Z" fill="#f2f2e6"/>
<path d="M57 262.5 L73 263.5 L73 288 L57 288 Z" fill="#f2f2e6"/>
<rect x="41" y="264.5" width="13" height="3.5" fill="#f0ee50"/><rect x="58.5" y="264.5" width="13" height="3.5" fill="#f0ee50"/>
<rect x="41" y="284" width="13" height="3" fill="#f0ee50"/><rect x="58.5" y="284" width="13" height="3" fill="#f0ee50"/>
<rect x="44" y="268.5" width="3" height="1.2" fill="#30a030"/><rect x="62" y="268.5" width="3" height="1.2" fill="#30a030"/>
<rect x="42" y="280" width="11" height="1" fill="#c8a0c8"/><rect x="59" y="281" width="12" height="1" fill="#a0c0a0"/>
<path d="M40 262 L55 261.5 M57 261.5 L73 262" stroke="#000" stroke-width="1.3"/>
<line x1="40.3" y1="260" x2="40.3" y2="289" stroke="#000" stroke-width="1.6"/>
<line x1="73.3" y1="260" x2="73.3" y2="289" stroke="#000" stroke-width="1.6"/>
<rect x="55" y="265" width="2.3" height="25" fill="#181870"/>
<path d="M42.5 276.5 L46 272 L47.5 273.5 L49 272 L50.5 273.5 L63 273.5 L63 270.5 L69.5 276.5 L63 282.5 L63 279.5 L50.5 279.5 L49 281 L47.5 279.5 L46 281 Z" fill="#e01010" stroke="#900000" stroke-width="0.5"/>
<rect x="38" y="288.5" width="37" height="3.2" fill="#000"/></svg>
<svg style="position:absolute;left:36px;top:336px" width="42" height="44" viewBox="36 336 42 44">
<defs><linearGradient id="gt" x1="0" y1="0" x2="0" y2="1"><stop offset="0" stop-color="#f4f8ff"/><stop offset="1" stop-color="#c8d6ee"/></linearGradient>
<radialGradient id="face" cx="0.4" cy="0.4" r="0.7"><stop offset="0" stop-color="#f8a040"/><stop offset="1" stop-color="#c85010"/></radialGradient>
<linearGradient id="body" x1="0" y1="0" x2="0" y2="1"><stop offset="0" stop-color="#5a82ff"/><stop offset="1" stop-color="#2f4fd0"/></linearGradient></defs>
<path d="M39 338 L58.5 338 L67.5 347 L67.5 374.5 L39 374.5 Z" fill="url(#gt)" stroke="#9aaccc" stroke-width="0.8"/>
<path d="M58.5 338 L58.5 347 L67.5 347 Z" fill="#5ab0f0"/>
<rect x="41.5" y="343" width="10" height="1.6" fill="#5a6a80"/><rect x="41.5" y="346" width="10" height="1.6" fill="#5a6a80"/>
<rect x="41.5" y="352" width="2" height="1.4" fill="#5a6a80"/><rect x="46.5" y="352" width="14" height="1.4" fill="#5a6a80"/>
<rect x="41.5" y="357" width="2" height="1.4" fill="#5a6a80"/><rect x="46.5" y="357" width="10" height="1.4" fill="#5a6a80"/>
<rect x="41.5" y="362" width="2" height="1.4" fill="#5a6a80"/><rect x="46.5" y="362" width="10" height="1.4" fill="#5a6a80"/>
<rect x="41.5" y="368" width="2" height="1.4" fill="#5a6a80"/><rect x="46.5" y="368" width="10" height="1.4" fill="#5a6a80"/>
<circle cx="65" cy="358.5" r="7.8" fill="#202020"/>
<ellipse cx="67" cy="360.5" rx="5.6" ry="6.2" fill="url(#face)"/>
<path d="M55.5 377 Q55.5 367 65.5 366 Q75.5 367 75.5 377 Z" fill="url(#body)"/>
<path d="M63 366.5 L66 372 L68.5 366.5 Z" fill="#9ad0ff"/></svg>
<svg style="position:absolute;left:40px;top:417px" width="32" height="45" viewBox="40 417 32 45">
<defs><linearGradient id="gc" x1="0" y1="0" x2="1" y2="1"><stop offset="0" stop-color="#dce8fc"/><stop offset="1" stop-color="#90aee8"/></linearGradient></defs>
<path d="M43 421.5 L67.5 419.5 L69 458 L44 459.5 Z" fill="url(#gc)" stroke="#6c86c0" stroke-width="0.9"/>
<rect x="48.5" y="424.5" width="18" height="7" rx="2.5" fill="#4c82ea"/>
<g fill="#c8d8fa" stroke="#7c96d0" stroke-width="0.6">
<circle cx="51.5" cy="437.5" r="2.4"/><circle cx="57.5" cy="437" r="2.4"/>
<circle cx="51.5" cy="444" r="2.4"/><circle cx="57.5" cy="443.5" r="2.4"/><circle cx="63.5" cy="443" r="2.4"/>
<circle cx="51.5" cy="451" r="2.4"/><circle cx="57.5" cy="450.5" r="2.4"/><circle cx="63.5" cy="450" r="2.4"/></g>
<circle cx="63.5" cy="436.5" r="2.5" fill="#f07020"/></svg>
<svg style="position:absolute;left:34px;top:498px" width="45" height="45" viewBox="34 498 45 45">
<ellipse cx="50" cy="533.5" rx="12" ry="6" fill="#e6e6ee" stroke="#9898b8" stroke-width="0.8"/>
<path d="M37 502.5 L61 500.3 L61.5 524 L39.5 529.5 Z" fill="#d0d0e8" stroke="#a8a8c8" stroke-width="0.8"/>
<path d="M39.5 505 L59 503.3 L59.5 521.5 L41.5 526 Z" fill="#5cc0f2"/>
<circle cx="64.5" cy="519.5" r="12.3" fill="#1676e6"/>
<circle cx="64.5" cy="519.5" r="12.3" fill="none" stroke="#0a4ab0" stroke-width="0.6"/>
<circle cx="64" cy="512.5" r="2" fill="#fff"/>
<path d="M61 516.5 L66 516.5 L66 525.5 L68 525.5 L68 527.5 L60.5 527.5 L60.5 525.5 L62.5 525.5 L62.5 518.5 L61 518.5 Z" fill="#fff"/></svg>
<svg style="position:absolute;left:32px;top:578px" width="48" height="48" viewBox="32 578 48 48">
<defs><linearGradient id="go" x1="0" y1="0" x2="0.3" y2="1"><stop offset="0" stop-color="#f8fff8"/><stop offset="0.5" stop-color="#d8f8c0"/><stop offset="1" stop-color="#e0f820"/></linearGradient></defs>
<path d="M37.5 608.5 L53.5 594 L76 606 L54 623.5 Z" fill="#2f7a0c" stroke="#000" stroke-width="1"/>
<path d="M36.5 606.5 L52.7 591.2 L75 603.5 L53.5 620.5 Z" fill="url(#go)" stroke="#000" stroke-width="1.5" stroke-linejoin="round"/>
<path d="M38 607.5 L53.5 619 L54 621.5 L37.5 609 Z" fill="#6ac020"/>
<path d="M53.5 621 L75 604 L75.5 606 L54 622.5 Z" fill="#5aa818"/>
<path d="M52 608 Q60 600 70 601 L64 609 Z" fill="#5ab030" opacity="0.8"/>
<path d="M55.8 604.2 L71.5 584.5 L76.3 588.3 L60.6 608 Z" fill="#2a30e0" stroke="#000a60" stroke-width="0.9" stroke-linejoin="round"/>
<line x1="58.5" y1="605.5" x2="73.6" y2="586.5" stroke="#d8dcff" stroke-width="1.2"/>
<path d="M55.8 604.2 L60.6 608 L54 610.5 Z" fill="#e8a818" stroke="#6a4a00" stroke-width="0.6"/>
<circle cx="74" cy="585.3" r="3.4" fill="#e8b020" stroke="#705000" stroke-width="0.8"/>
<circle cx="74" cy="585.3" r="1.2" fill="#806000"/></svg>
</body></html>
